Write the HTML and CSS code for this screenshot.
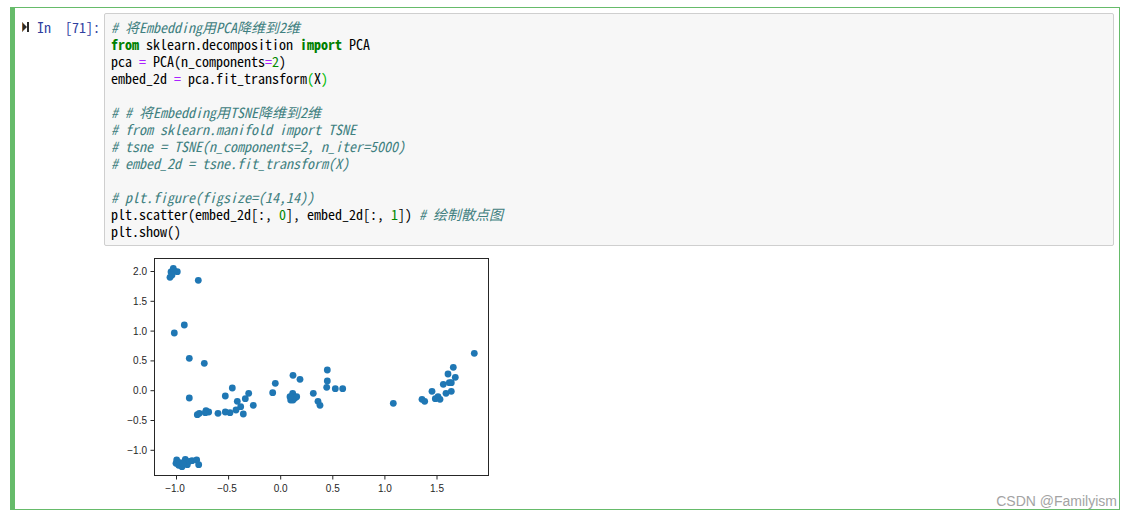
FILE: index.html
```html
<!DOCTYPE html>
<html lang="zh">
<head>
<meta charset="utf-8">
<title>Notebook cell</title>
<link rel="stylesheet" href="styles.css">
</head>
<body>
<div class="cell">
  <div class="input">
    <div class="prompt">
      <svg class="run-icon" width="7" height="10" viewBox="0 0 7 10"><path d="M0 0 L5 5 L0 10 Z" fill="#2a2a2a"/><rect x="5" y="0" width="2" height="10" fill="#2a2a2a"/><rect x="0" y="1" width="1" height="8" fill="#8a5a2a"/></svg>
      <span class="prompt-text">In&nbsp;&nbsp;[71]:</span>
    </div>
<pre class="code"><span class="c"># 将Embedding用PCA降维到2维</span>
<span class="k">from</span> sklearn.decomposition <span class="k">import</span> PCA
pca <span class="o">=</span> PCA(n_components<span class="o">=</span><span class="n">2</span>)
embed_2d <span class="o">=</span> pca.fit_transform<span class="mb">(</span>X<span class="mb">)</span>

<span class="c"># # 将Embedding用TSNE降维到2维</span>
<span class="c"># from sklearn.manifold import TSNE</span>
<span class="c"># tsne = TSNE(n_components=2, n_iter=5000)</span>
<span class="c"># embed_2d = tsne.fit_transform(X)</span>

<span class="c"># plt.figure(figsize=(14,14))</span>
plt.scatter(embed_2d[:, <span class="n">0</span>], embed_2d[:, <span class="n">1</span>]) <span class="c"># 绘制散点图</span>
plt.show()</pre>
  </div>
  <div class="output">
    <div class="out-prompt"></div>
    <svg class="plot" width="396" height="258" viewBox="104 246 396 258">
      <g class="ticks" stroke="#262626" stroke-width="1">
        <line x1="150.5" y1="271.5" x2="154.5" y2="271.5"/>
        <line x1="150.5" y1="301.3" x2="154.5" y2="301.3"/>
        <line x1="150.5" y1="331.1" x2="154.5" y2="331.1"/>
        <line x1="150.5" y1="360.9" x2="154.5" y2="360.9"/>
        <line x1="150.5" y1="390.7" x2="154.5" y2="390.7"/>
        <line x1="150.5" y1="420.5" x2="154.5" y2="420.5"/>
        <line x1="150.5" y1="450.3" x2="154.5" y2="450.3"/>
        <line x1="176.5" y1="475.5" x2="176.5" y2="479.5"/>
        <line x1="228.6" y1="475.5" x2="228.6" y2="479.5"/>
        <line x1="280.7" y1="475.5" x2="280.7" y2="479.5"/>
        <line x1="332.8" y1="475.5" x2="332.8" y2="479.5"/>
        <line x1="384.9" y1="475.5" x2="384.9" y2="479.5"/>
        <line x1="437" y1="475.5" x2="437" y2="479.5"/>
      </g>
      <g class="ylabels" text-anchor="end">
        <text x="147" y="275">2.0</text>
        <text x="147" y="304.8">1.5</text>
        <text x="147" y="334.6">1.0</text>
        <text x="147" y="364.4">0.5</text>
        <text x="147" y="394.2">0.0</text>
        <text x="147" y="424">−0.5</text>
        <text x="147" y="453.8">−1.0</text>
      </g>
      <g class="xlabels" text-anchor="middle">
        <text x="175" y="491.5">−1.0</text>
        <text x="227" y="491.5">−0.5</text>
        <text x="280.7" y="491.5">0.0</text>
        <text x="332.8" y="491.5">0.5</text>
        <text x="384.9" y="491.5">1.0</text>
        <text x="437" y="491.5">1.5</text>
      </g>
      <g class="pts" fill="#1f77b4">
        <circle cx="170" cy="277.3" r="3.4"/><circle cx="171" cy="272" r="3.4"/><circle cx="173.3" cy="268.3" r="3.4"/><circle cx="177.3" cy="271.7" r="3.4"/><circle cx="174" cy="271" r="3.4"/><circle cx="172" cy="275" r="3.4"/>
        <circle cx="198.3" cy="280.3" r="3.4"/>
        <circle cx="184.3" cy="325" r="3.4"/><circle cx="174.3" cy="333" r="3.4"/>
        <circle cx="189.3" cy="358.3" r="3.4"/><circle cx="204.3" cy="363.3" r="3.4"/>
        <circle cx="474.3" cy="353.3" r="3.4"/>
        <circle cx="293" cy="375.3" r="3.4"/><circle cx="300" cy="379.3" r="3.4"/><circle cx="327.3" cy="370" r="3.4"/><circle cx="327.3" cy="381" r="3.4"/><circle cx="275.3" cy="383.3" r="3.4"/>
        <circle cx="232.3" cy="388" r="3.4"/><circle cx="272.7" cy="392.7" r="3.4"/>
        <circle cx="189.3" cy="398" r="3.4"/><circle cx="225.3" cy="396" r="3.4"/><circle cx="237.3" cy="401.3" r="3.4"/><circle cx="248.7" cy="393.3" r="3.4"/><circle cx="245.3" cy="398.7" r="3.4"/><circle cx="240.7" cy="406.7" r="3.4"/><circle cx="236" cy="410" r="3.4"/><circle cx="230" cy="412.7" r="3.4"/><circle cx="225.3" cy="412" r="3.4"/><circle cx="243.3" cy="414" r="3.4"/><circle cx="253.3" cy="405.3" r="3.4"/><circle cx="218" cy="413.3" r="3.4"/><circle cx="197.3" cy="414.7" r="3.4"/><circle cx="199.3" cy="413.3" r="3.4"/><circle cx="206" cy="410.7" r="3.4"/><circle cx="208.7" cy="412" r="3.4"/><circle cx="205.3" cy="412.7" r="3.4"/>
        <circle cx="292.7" cy="393.3" r="3.4"/><circle cx="293.3" cy="396.7" r="3.4"/><circle cx="290.7" cy="400" r="3.4"/><circle cx="296.7" cy="396.7" r="3.4"/><circle cx="295" cy="398" r="3.4"/><circle cx="293" cy="400" r="3.4"/><circle cx="290" cy="396.7" r="3.4"/>
        <circle cx="313.3" cy="393.3" r="3.4"/><circle cx="318" cy="401.3" r="3.4"/><circle cx="320" cy="405.3" r="3.4"/><circle cx="326.7" cy="387.3" r="3.4"/><circle cx="335.3" cy="388.7" r="3.4"/><circle cx="342.7" cy="388.7" r="3.4"/>
        <circle cx="393.3" cy="403.3" r="3.4"/><circle cx="422" cy="399.3" r="3.4"/><circle cx="424.7" cy="401.3" r="3.4"/><circle cx="432" cy="391.3" r="3.4"/><circle cx="435.3" cy="398.7" r="3.4"/><circle cx="438" cy="396.7" r="3.4"/><circle cx="440" cy="399.3" r="3.4"/><circle cx="443.3" cy="384.3" r="3.4"/><circle cx="448" cy="374" r="3.4"/><circle cx="449.3" cy="382.7" r="3.4"/><circle cx="451.3" cy="382.7" r="3.4"/><circle cx="453.3" cy="367.3" r="3.4"/><circle cx="455.3" cy="377.3" r="3.4"/><circle cx="446" cy="393.3" r="3.4"/><circle cx="451.3" cy="391.3" r="3.4"/>
        <circle cx="176.7" cy="460" r="3.4"/><circle cx="176" cy="463.3" r="3.4"/><circle cx="178.7" cy="465.3" r="3.4"/><circle cx="182" cy="466.7" r="3.4"/><circle cx="185.3" cy="459.3" r="3.4"/><circle cx="187.3" cy="464.7" r="3.4"/><circle cx="189.3" cy="461.3" r="3.4"/><circle cx="192" cy="460.7" r="3.4"/><circle cx="196.7" cy="460" r="3.4"/><circle cx="198.7" cy="464.7" r="3.4"/><circle cx="180" cy="462.7" r="3.4"/><circle cx="183" cy="464" r="3.4"/>
      </g>
      <rect x="154.5" y="258.5" width="334" height="217" fill="none" stroke="#262626" stroke-width="1"/>
    </svg>
  </div>
  <div class="watermark">CSDN @Familyism</div>
</div>
</body>
</html>
```

FILE: styles.css
```css
html, body {
  margin: 0;
  padding: 0;
  background: #ffffff;
}

.cell {
  position: relative;
  box-sizing: border-box;
  width: 1110px;
  height: 503px;
  margin: 7px 0 0 10px;
  padding: 5px;
  border: 1px solid #66bb6a;
  border-left: 5px solid #66bb6a;
  display: flex;
  flex-direction: column;
}

.input {
  display: flex;
  align-items: flex-start;
}

.prompt {
  width: 84px;
  flex: none;
  display: flex;
  align-items: flex-start;
}

.run-icon {
  display: block;
  margin: 9px 0 0 2px;
}

.prompt-text {
  margin-left: auto;
  padding: 6px 4px 0 0;
  font-family: "Noto Sans Mono CJK SC", "Liberation Mono", monospace;
  font-size: 14px;
  line-height: 17px;
  color: #303f9f;
  white-space: nowrap;
}

.code {
  flex: 1;
  margin: 0;
  height: 233px;
  box-sizing: border-box;
  padding: 5px 6px;
  background: #f7f7f7;
  border: 1px solid #cfcfcf;
  border-radius: 2px;
  font-family: "Noto Sans Mono CJK SC", "Liberation Mono", monospace;
  font-size: 14px;
  line-height: 17px;
  color: #000;
  white-space: pre;
  overflow: hidden;
}

.code .c { color: #408080; font-style: italic; }
.code .k { color: #008000; font-weight: bold; }
.code .o { color: #aa22ff; }
.code .n { color: #008800; }
.code .mb { color: #00bb00; }

.output {
  display: flex;
  align-items: flex-start;
}

.out-prompt {
  width: 84px;
  flex: none;
}

.plot {
  display: block;
}

.plot text {
  font-family: "Liberation Sans", "DejaVu Sans", sans-serif;
  font-size: 10px;
  fill: #262626;
}

.watermark {
  position: absolute;
  right: 2px;
  bottom: 0;
  font-family: "Liberation Sans", Arial, sans-serif;
  font-size: 14px;
  line-height: 16px;
  color: #a3a3a3;
}
```
